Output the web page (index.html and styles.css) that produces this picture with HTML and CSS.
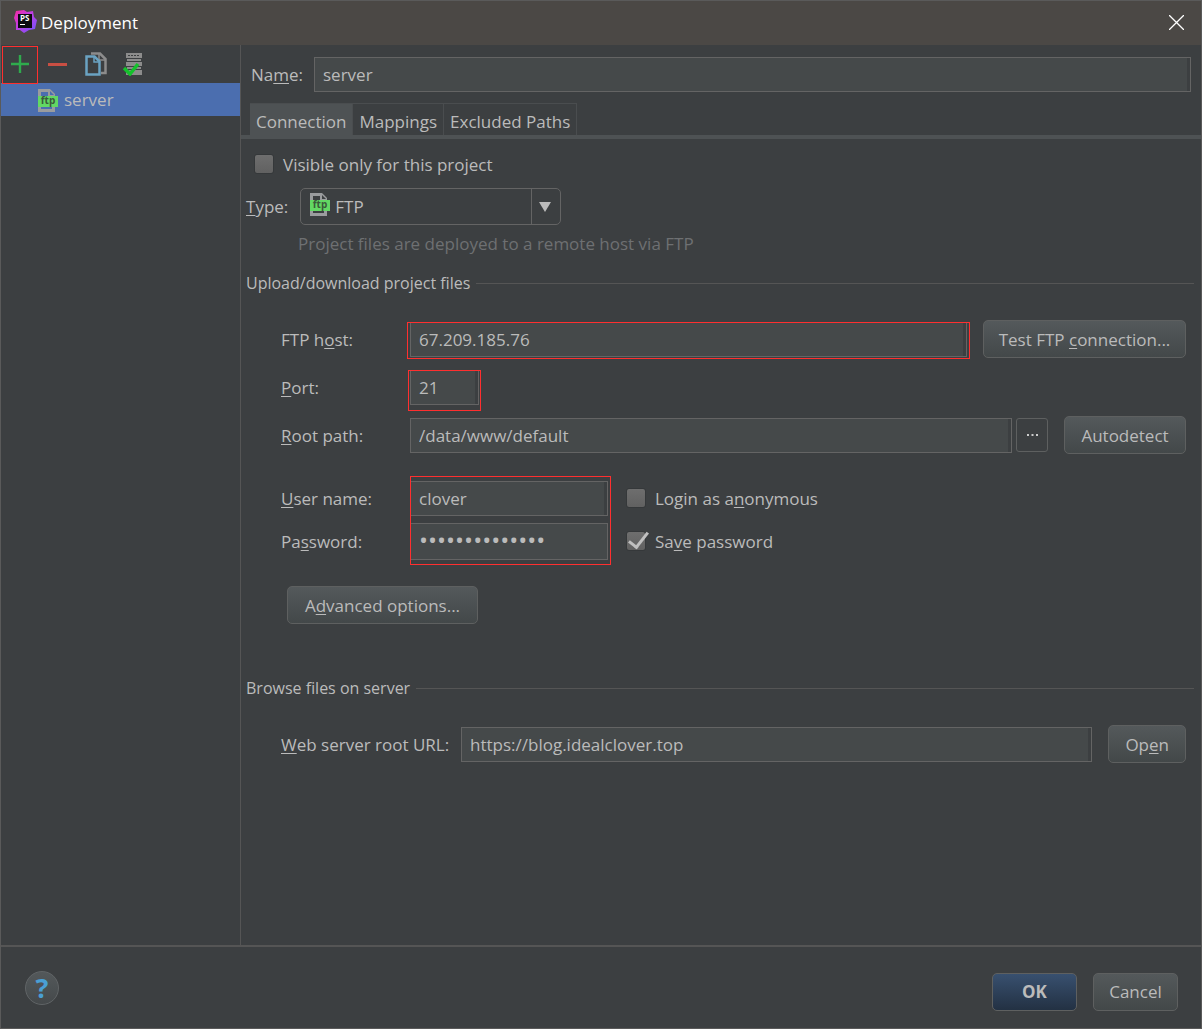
FILE: index.html
```html
<!DOCTYPE html>
<html lang="en">
<head>
  <meta charset="UTF-8" />
  <title>Deployment</title>
  <link rel="stylesheet" href="styles.css">
</head>
<body>

  <!-- Title Bar -->
  <header class="titlebar">
    <svg class="logo" width="24" height="24" viewBox="0 0 24 24">
      <defs>
        <linearGradient id="ps" x1="0" y1="0" x2="1" y2="1">
          <stop offset="0" stop-color="#f52a9c" />
          <stop offset="0.4" stop-color="#c63ce0" />
          <stop offset="1" stop-color="#6b57ff" />
        </linearGradient>
      </defs>
      <path d="M3 1l8-1 3 2 6-1 1 6 3 3-2 9-6 1-5 3-4-3-4 0 0-7-2-5z" fill="url(#ps)" />
      <path d="M5 4h14v14H5z" fill="#0b0b10" />
      <text x="7" y="11" font-size="8" font-weight="bold" fill="#fff">PS</text>
      <path d="M7 14h5v1H7z" fill="#fff" />
    </svg>
    <h1>Deployment</h1>
    <button class="close" aria-label="Close">
      <svg width="15" height="15" viewBox="0 0 15 15"><path d="M0 0l15 15M15 0L0 15" stroke="#fff" stroke-width="1.3" /></svg>
    </button>
  </header>

  <div class="content">
    <!-- Server List -->
    <aside>
      <div class="toolbar">
        <button class="mark mark-add" aria-label="Add">
          <svg width="18" height="18" viewBox="0 0 18 18"><path d="M9 0v18M0 9h18" stroke="#2faa4d" stroke-width="2.4" /></svg>
        </button>
        <button aria-label="Remove">
          <svg width="20" height="18" viewBox="0 0 20 18"><path d="M0 8h19v3H0z" fill="#c94f43" /></svg>
        </button>
        <button aria-label="Copy">
          <svg width="22" height="24" viewBox="0 0 22 24" fill="none">
            <path d="M6 1.500h9l5.500 5.500v14H16" stroke="#8c8c8c" stroke-width="2.500" />
            <path d="M14 2v6h6" stroke="#8c8c8c" stroke-width="1.500" />
            <path d="M1.500 4.500h8l5 5v13h-13z" fill="#3c3f41" stroke="#6aa3c2" stroke-width="2.500" />
            <path d="M9 5v5h5" stroke="#6aa3c2" stroke-width="1.500" />
          </svg>
        </button>
        <button aria-label="Use as default">
          <svg width="22" height="24" viewBox="0 0 22 24">
            <path d="M3 1h16v5H3zM4 7h14v2H4zM3 10h16v4H3zM4 15h14v2H4zM3 18h16v5H3z" fill="#8c8c8c" />
            <path d="M5 3h2v1H5zM8 3h2v1H8zM11 3h2v1h-2zM14 3h2v1h-2z" fill="#3c3f41" />
            <path d="M1 16l6 6 8-10" fill="none" stroke="#13c22b" stroke-width="3.500" />
          </svg>
        </button>
      </div>
      <ul class="servers">
        <li>
          <svg width="20" height="23" viewBox="0 0 20 23">
            <path d="M0 0h12l5 5v3H0z" fill="#9a9c9e" />
            <path d="M3 3h7v5H3zM12 2v4h4z" fill="#4b6eaf" />
            <path d="M0 18h17v5H0z" fill="#9a9c9e" />
            <path d="M3 18h11v2H3z" fill="#4b6eaf" />
            <path d="M0 7h20v11H0z" fill="#62d863" />
            <text x="10" y="15" text-anchor="middle" font-size="10" font-weight="bold" fill="#3a5a3a">ftp</text>
          </svg>
          server
        </li>
      </ul>
    </aside>

    <!-- Server Settings -->
    <main>
      <div class="name-row">
        <label for="name">Na<u>m</u>e:</label>
        <input type="text" id="name" class="grow" value="server" />
      </div>

      <div class="tabs" role="tablist">
        <button role="tab" class="active" aria-selected="true">Connection</button>
        <button role="tab">Mappings</button>
        <button role="tab">Excluded Paths</button>
      </div>

      <div class="panel">
        <div class="visible-row">
          <input type="checkbox" id="visible" />
          <label for="visible">Visible only for this project</label>
        </div>

        <div class="type-row">
          <label for="type"><u>T</u>ype:</label>
          <div class="combo">
            <select id="type"><option>FTP</option></select>
            <svg class="combo-icon" width="20" height="23" viewBox="0 0 20 23">
              <path d="M0 0h12l5 5v3H0z" fill="#9a9c9e" />
              <path d="M3 3h7v5H3zM12 2v4h4z" fill="#3c3f41" />
              <path d="M0 18h17v5H0z" fill="#9a9c9e" />
              <path d="M3 18h11v2H3z" fill="#3c3f41" />
              <path d="M0 7h20v11H0z" fill="#62d863" />
              <text x="10" y="15" text-anchor="middle" font-size="10" font-weight="bold" fill="#3a5a3a">ftp</text>
            </svg>
            <svg class="combo-arrow" width="12" height="10" viewBox="0 0 12 10"><path d="M0 0h12L6 10z" fill="#bbb" /></svg>
          </div>
        </div>
        <p class="hint">Project files are deployed to a remote host via FTP</p>

        <h2>Upload/download project files</h2>
        <div class="group">
          <div class="row">
            <label for="host">FTP h<u>o</u>st:</label>
            <div class="mark mark-host grow"><input type="text" id="host" value="67.209.185.76" /></div>
            <button class="btn test">Test FTP <u>c</u>onnection...</button>
          </div>
          <div class="row">
            <label for="port"><u>P</u>ort:</label>
            <div class="mark mark-port"><input type="text" id="port" value="21" /></div>
          </div>
          <div class="row">
            <label for="root"><u>R</u>oot path:</label>
            <div class="browse grow">
              <input type="text" id="root" class="grow" value="/data/www/default" />
              <button class="more" aria-label="Browse"><svg width="11" height="2" viewBox="0 0 11 2"><path d="M0 0h2v2H0zM4.500 0h2v2h-2zM9 0h2v2H9z" fill="#ccc" /></svg></button>
            </div>
            <button class="btn detect">Autodetect</button>
          </div>

          <div class="login">
            <div class="stack labels">
              <label for="user"><u>U</u>ser name:</label>
              <label for="pass">Pa<u>s</u>sword:</label>
            </div>
            <div class="stack mark mark-login">
              <div><input type="text" id="user" value="clover" /></div>
              <div><input type="password" id="pass" value="cloverpassword" /></div>
            </div>
            <div class="stack checks">
              <div><input type="checkbox" id="anon" /><label for="anon">Login as a<u>n</u>onymous</label></div>
              <div><input type="checkbox" id="save" checked /><label for="save">Sa<u>v</u>e password</label></div>
            </div>
          </div>

          <button class="btn advanced">A<u>d</u>vanced options...</button>
        </div>

        <h2>Browse files on server</h2>
        <div class="group">
          <div class="row url-row">
            <label for="url"><u>W</u>eb server root URL:</label>
            <input type="text" id="url" class="grow" value="https://blog.idealclover.top" />
            <button class="btn">Op<u>e</u>n</button>
          </div>
        </div>
      </div>
    </main>
  </div>

  <!-- Dialog Buttons -->
  <footer>
    <button class="help" aria-label="Help">?</button>
    <button class="btn ok">OK</button>
    <button class="btn cancel">Cancel</button>
  </footer>

</body>
</html>
```
FILE: styles.css
```css
* {
  box-sizing: border-box;
}

body {
  margin: 0;
  min-height: 100vh;
  display: flex;
  flex-direction: column;
  border: 1px solid #5a5a5a;
  background-color: #3c3f41;
  color: #bbbbbb;
  font-family: 'Open Sans', 'Noto Sans', sans-serif;
  font-size: 17px;
  line-height: 24px;
}

button,
input,
select {
  font: inherit;
  color: inherit;
}

button {
  display: flex;
  align-items: center;
  justify-content: center;
  padding: 0;
  border: none;
  background: none;
  white-space: pre;
}

label {
  padding-top: 1px;
  white-space: nowrap;
}

u {
  text-decoration-thickness: 1px;
  text-underline-offset: 2px;
}

.grow {
  flex: 1;
  min-width: 0;
}

/* Title bar */
.titlebar {
  display: flex;
  align-items: center;
  height: 44px;
  padding: 0 17px 2px 12px;
  background-color: #4b4845;
}

h1 {
  flex: 1;
  margin: 2px 0 0 4px;
  color: #ffffff;
  font-size: 17px;
  font-weight: normal;
}

.content {
  flex: 1;
  display: flex;
}

/* Server list */
aside {
  width: 240px;
  border-right: 1px solid #555555;
}

.toolbar {
  display: flex;
  height: 38px;
}

.toolbar button {
  width: 38px;
}

.servers {
  margin: 0;
  padding: 0;
  list-style: none;
}

.servers li {
  display: flex;
  align-items: center;
  gap: 6px;
  height: 33px;
  padding: 1px 0 0 37px;
  background-color: #4b6eaf;
}

main {
  flex: 1;
  min-width: 0;
}

/* Fields */
input[type="text"],
input[type="password"] {
  display: block;
  width: 100%;
  height: 35px;
  padding: 0 8px;
  border: 1px solid #646464;
  background-color: #45494a;
  box-shadow: inset -3px 0 #3c3f41;
  outline: none;
}

input[type="password"] {
  height: 37px;
  padding-bottom: 5px;
  box-shadow: none;
  font-size: 24px;
}

input[type="checkbox"] {
  appearance: none;
  flex: none;
  width: 20px;
  height: 20px;
  margin: 0 9px 2px 0;
  border: 1px solid #35383a;
  border-radius: 3px;
  background: linear-gradient(#6e6e6e, #616161);
}

input[type="checkbox"]:checked {
  position: relative;
}

input[type="checkbox"]:checked::after {
  content: "";
  position: absolute;
  left: 6px;
  bottom: 2px;
  width: 8px;
  height: 17px;
  border: solid #c0c0c0;
  border-width: 0 3px 3px 0;
  transform: rotate(38deg);
}

.btn {
  height: 38px;
  padding: 1px 16px 0;
  border: 1px solid #5e6060;
  border-radius: 5px;
  background: linear-gradient(#54595b, #434849);
}

.name-row {
  display: flex;
  align-items: center;
  gap: 11px;
  padding: 12px 10px 11px;
}

/* Tabs */
.tabs {
  display: flex;
  height: 36px;
  padding-left: 9px;
  border-bottom: 4px solid #4e5254;
}

.tabs button {
  padding: 4px 6px 0;
  border: solid #4a4d4f;
  border-width: 1px 1px 0 0;
}

.tabs .active {
  background-color: #4e5254;
}

.panel {
  padding: 13px 7px 0 5px;
}

.visible-row {
  display: flex;
  align-items: center;
  padding-left: 8px;
}

.type-row {
  display: flex;
  align-items: center;
  gap: 12px;
  margin-top: 11px;
}

.combo {
  position: relative;
  width: 261px;
}

.combo select {
  appearance: none;
  display: block;
  width: 100%;
  height: 37px;
  padding: 0 34px;
  border: 1px solid #646464;
  border-radius: 5px;
  background: linear-gradient(#646464, #646464) right 28px top / 1px 100% no-repeat;
}

.combo-icon {
  position: absolute;
  left: 10px;
  top: 5px;
}

.combo-arrow {
  position: absolute;
  right: 10px;
  top: 14px;
}

.hint {
  margin: 7px 0 0 52px;
  color: #6e7072;
}

h2 {
  display: flex;
  align-items: center;
  gap: 6px;
  margin: 15px 0 25px;
  font-size: 16px;
  font-weight: normal;
}

h2::after {
  content: "";
  flex: 1;
  border-top: 1px solid #555555;
}

.group {
  padding: 0 8px 0 35px;
}

.row {
  display: flex;
  align-items: center;
  height: 38px;
  margin-bottom: 10px;
}

.row > label,
.labels {
  width: 129px;
}

.row > .btn {
  margin-left: 16px;
}

.test {
  width: 203px;
}

.detect {
  width: 122px;
}

.url-row > label {
  width: 180px;
}

.browse {
  display: flex;
  gap: 4px;
}

.more {
  width: 32px;
  height: 34px;
  border: 1px solid #5e6060;
  border-radius: 3px;
}

/* Login block */
.login {
  display: flex;
  margin-top: 23px;
}

.stack > * {
  display: flex;
  align-items: center;
  height: 43px;
}

.checks {
  margin-left: 18px;
}

.advanced {
  width: 191px;
  margin: 23px 0 52px 6px;
}

/* Red highlight frames */
.mark {
  position: relative;
}

.mark::after {
  content: "";
  position: absolute;
  inset: 0;
  border: 1px solid #ff2f2f;
  pointer-events: none;
}

.mark-add::after {
  inset: 1px 1px -1px;
}

.mark-host::after {
  inset: 0 -3px -2px;
}

.mark-port {
  width: 69px;
}

.mark-port::after {
  inset: 0 -2px -6px;
}

.mark-login {
  width: 198px;
}

.mark-login > * {
  width: 198px;
}

.mark-login::after {
  inset: -1px -3px -2px 0;
}

/* Footer */
footer {
  display: flex;
  align-items: center;
  height: 83px;
  padding: 8px 23px 0 24px;
  border-top: 2px solid #555555;
}

.help {
  width: 34px;
  height: 34px;
  margin: 0 auto 8px 0;
  border: 1px solid #606466;
  border-radius: 50%;
  background: linear-gradient(#53585a, #45494b);
  color: #4a9fd4;
  font-size: 27px;
  font-weight: bold;
}

.ok {
  width: 85px;
  margin-right: 16px;
  background: linear-gradient(#38506f, #233143);
  font-weight: bold;
}

.cancel {
  width: 85px;
}
```
